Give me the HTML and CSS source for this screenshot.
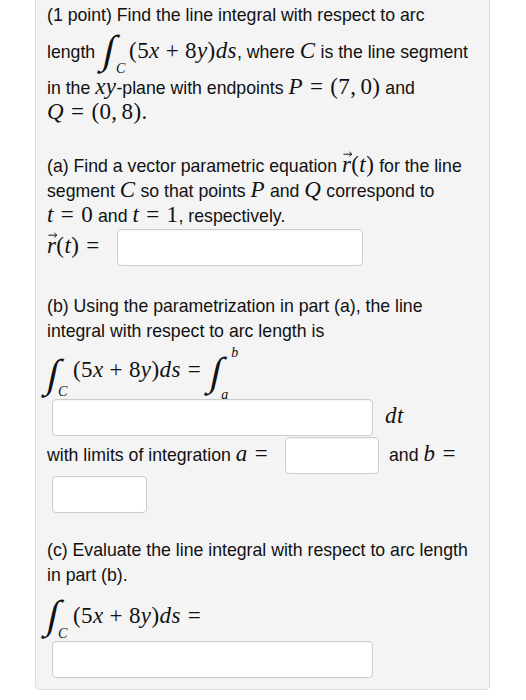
FILE: index.html
```html
<!DOCTYPE html>
<html>
<head>
<meta charset="utf-8">
<link rel="stylesheet" href="styles.css">
</head>
<body>
<div class="card">
  <p class="para">(1 point) Find the line integral with respect to arc<br>length <span class="int int-c1"><span class="isym">∫</span><i class="isub">C</i></span><span class="m">(5<i>x</i><span class="bin">+</span>8<i>y</i>)<i>ds</i></span>, where <i class="m">C</i> is the line segment<br>in the <i class="m">xy</i>-plane with endpoints <span class="m"><i>P</i><span class="rel">=</span>(7,<span class="thin"></span>0)</span> and<br><span class="m"><i>Q</i><span class="rel">=</span>(0,<span class="thin"></span>8).</span></p>

  <p class="para">(a) Find a vector parametric equation <span class="m"><span class="vec"><i>r</i><svg class="arrow" width="10" height="6" viewBox="0 0 10 6"><path d="M0.5 3.2H8.6M6.4 1L8.9 3.2L6.4 5.4" fill="none" stroke="#111" stroke-width="1"/></svg></span>(<i>t</i>)</span> for the line<br>segment <i class="m">C</i> so that points <i class="m">P</i> and <i class="m">Q</i> correspond to<br><span class="m"><i>t</i><span class="rel">=</span>0</span> and <span class="m"><i>t</i><span class="rel">=</span>1</span>, respectively.<br><span class="m"><span class="vec"><i>r</i><svg class="arrow" width="10" height="6" viewBox="0 0 10 6"><path d="M0.5 3.2H8.6M6.4 1L8.9 3.2L6.4 5.4" fill="none" stroke="#111" stroke-width="1"/></svg></span>(<i>t</i>)<span class="rel">=</span></span><input class="ans ans-r" type="text"></p>

  <p class="para para-b">(b) Using the parametrization in part (a), the line<br>integral with respect to arc length is<br><span class="int int-c2"><span class="isym">∫</span><i class="isub">C</i></span><span class="m">(5<i>x</i><span class="bin">+</span>8<i>y</i>)<i>ds</i><span class="rel">=</span></span><span class="int int-ab"><span class="isym">∫</span><i class="isup">b</i><i class="isub">a</i></span><br><input class="ans ans-wide" type="text"><span class="m dt"><i>dt</i></span><br>with limits of integration <span class="m"><i>a</i><span class="rel">=</span></span><input class="ans ans-a" type="text"><span class="after-a">and <span class="m"><i>b</i><span class="rel">=</span></span></span><br><input class="ans ans-b" type="text"></p>

  <p class="para para-c">(c) Evaluate the line integral with respect to arc length<br>in part (b).<br><span class="int int-c3"><span class="isym">∫</span><i class="isub">C</i></span><span class="m">(5<i>x</i><span class="bin">+</span>8<i>y</i>)<i>ds</i><span class="rel">=</span></span><br><input class="ans ans-wide" type="text"></p>
</div>
</body>
</html>
```

FILE: styles.css
```css
* { box-sizing: border-box; }
html, body { margin: 0; padding: 0; background: #ffffff; }
body {
  font-family: "Liberation Sans", Arial, sans-serif;
  font-size: 17.7px;
  color: #111111;
}
.card {
  margin-left: 35px;
  width: 455px;
  background: #f4f4f4;
  border: 1px solid #dcdcdc;
  border-top: none;
  border-radius: 0 0 5px 5px;
  padding: 3px 8px 11px 11px;
}
.para {
  margin: 0;
  line-height: 25px;
  white-space: nowrap;
}
.para + .para { margin-top: 28px; }
.para-c { margin-top: 25px !important; }

.m {
  font-family: "Liberation Serif", "Times New Roman", serif;
  font-size: 23px;
  line-height: 20px;
  font-style: normal;
  letter-spacing: 0.4px;
}
i.m, .m i { font-style: italic; }
.bin { margin: 0 6px; }
.rel { margin: 0 7px; }
.thin { display: inline-block; width: 4px; }

.vec { position: relative; display: inline-block; }
.arrow { position: absolute; left: 1px; top: -4px; }

.int {
  display: inline-block;
  position: relative;
  font-family: "Liberation Serif", "Times New Roman", serif;
}
.int-c1 { width: 26px; height: 48px; vertical-align: -18px; margin-right: 3px; }
.int-c2 { width: 25px; height: 55px; vertical-align: -22px; margin-right: 1px; }
.int-ab { width: 30px; height: 55px; vertical-align: -22px; margin-left: 2px; }
.int-c3 { width: 25px; height: 53px; vertical-align: -18px; margin-right: 1px; }

.isym {
  position: absolute;
  left: 4px;
  top: 0;
  font-size: 40px;
  line-height: 44px;
  transform: skewX(-12deg);
}
.isub, .isup {
  position: absolute;
  font-style: italic;
  font-size: 14px;
  line-height: 14px;
}
.int-c1 .isub { left: 16px; top: 34px; }
.int-c2 .isym { left: 1px; top: 8px; }
.int-c2 .isub { left: 11px; top: 41px; }
.int-ab .isym { left: 1px; top: 6px; }
.int-ab .isup { left: 21px; top: 2px; }
.int-ab .isub { left: 11px; top: 44px; }
.int-c3 .isym { left: 1px; top: 5px; }
.int-c3 .isub { left: 11px; top: 39px; }

.ans {
  display: inline-block;
  height: 37px;
  padding: 0 6px;
  border: 1px solid #cccccc;
  border-radius: 4px;
  background: #ffffff;
  font-family: "Liberation Sans", Arial, sans-serif;
  font-size: 17px;
  vertical-align: baseline;
  outline: none;
  box-shadow: inset 0 1px 1px rgba(0,0,0,0.04);
}
.ans-r { width: 246px; margin-left: 10px; }
.ans-wide { width: 321px; margin-left: 5px; }
.ans-a { width: 94px; margin: 1px 0 0 10px; }
.ans-b { width: 95px; margin: 2px 0 0 5px; }
.dt { margin-left: 12px; }
.after-a { margin-left: 10px; }
```
